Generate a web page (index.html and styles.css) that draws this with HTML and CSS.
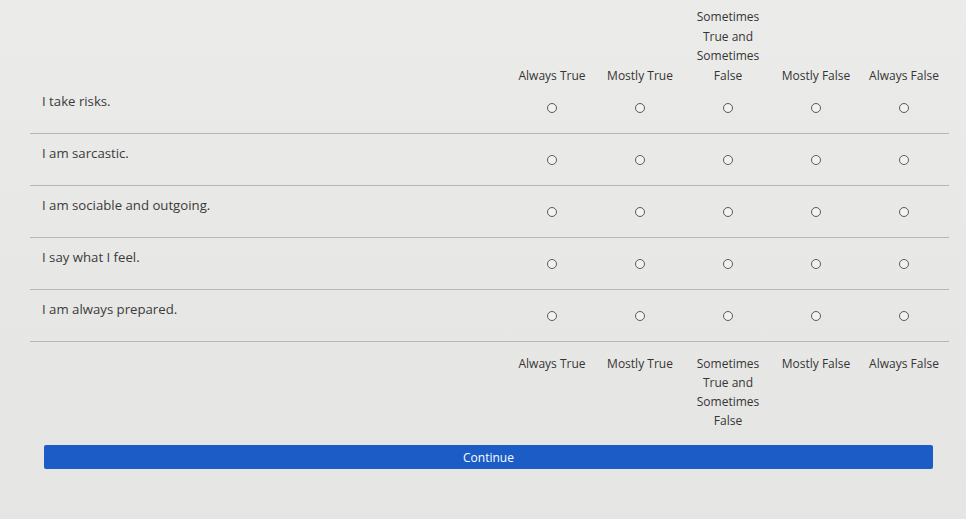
FILE: index.html
```html
<!DOCTYPE html>
<html lang="en">
<head>
<meta charset="utf-8">
<title>Survey</title>
<link rel="stylesheet" href="styles.css">
</head>
<body>
<main class="page">
  <div class="matrix">
    <div class="row head">
      <div class="label"></div>
      <div class="col">Always True</div>
      <div class="col">Mostly True</div>
      <div class="col">Sometimes True and Sometimes False</div>
      <div class="col">Mostly False</div>
      <div class="col">Always False</div>
    </div>
    <div class="row item">
      <div class="label">I take risks.</div>
      <div class="cell"><input type="radio" name="q1"></div>
      <div class="cell"><input type="radio" name="q1"></div>
      <div class="cell"><input type="radio" name="q1"></div>
      <div class="cell"><input type="radio" name="q1"></div>
      <div class="cell"><input type="radio" name="q1"></div>
    </div>
    <div class="row item">
      <div class="label">I am sarcastic.</div>
      <div class="cell"><input type="radio" name="q2"></div>
      <div class="cell"><input type="radio" name="q2"></div>
      <div class="cell"><input type="radio" name="q2"></div>
      <div class="cell"><input type="radio" name="q2"></div>
      <div class="cell"><input type="radio" name="q2"></div>
    </div>
    <div class="row item">
      <div class="label">I am sociable and outgoing.</div>
      <div class="cell"><input type="radio" name="q3"></div>
      <div class="cell"><input type="radio" name="q3"></div>
      <div class="cell"><input type="radio" name="q3"></div>
      <div class="cell"><input type="radio" name="q3"></div>
      <div class="cell"><input type="radio" name="q3"></div>
    </div>
    <div class="row item">
      <div class="label">I say what I feel.</div>
      <div class="cell"><input type="radio" name="q4"></div>
      <div class="cell"><input type="radio" name="q4"></div>
      <div class="cell"><input type="radio" name="q4"></div>
      <div class="cell"><input type="radio" name="q4"></div>
      <div class="cell"><input type="radio" name="q4"></div>
    </div>
    <div class="row item">
      <div class="label">I am always prepared.</div>
      <div class="cell"><input type="radio" name="q5"></div>
      <div class="cell"><input type="radio" name="q5"></div>
      <div class="cell"><input type="radio" name="q5"></div>
      <div class="cell"><input type="radio" name="q5"></div>
      <div class="cell"><input type="radio" name="q5"></div>
    </div>
    <div class="row foot">
      <div class="label"></div>
      <div class="col">Always True</div>
      <div class="col">Mostly True</div>
      <div class="col">Sometimes True and Sometimes False</div>
      <div class="col">Mostly False</div>
      <div class="col">Always False</div>
    </div>
  </div>
  <div class="actions">
    <button class="continue" type="button">Continue</button>
  </div>
</main>
</body>
</html>
```
FILE: styles.css
```css
* { box-sizing: border-box; }
html, body {
  margin: 0;
  padding: 0;
  background: #e8e8e6;
}
body {
  font-family: "Open Sans", "Noto Sans", "Liberation Sans", sans-serif;
  color: #353535;
  width: 966px;
  height: 519px;
  overflow: hidden;
  background: linear-gradient(180deg, #ebebe9 0%, #e7e7e5 60%, #e5e5e3 100%);
}
.page {
  padding: 7px 0 0 30px;
}
.matrix {
  width: 919px;
  display: flex;
  flex-direction: column;
}
.row {
  display: grid;
  grid-template-columns: 478px repeat(5, 88px);
}
.head {
  align-items: end;
  height: 75px;
}
.col {
  text-align: center;
  font-size: 12px;
  line-height: 19.5px;
  padding: 0 6px;
}
.item {
  height: 52px;
  border-bottom: 1px solid #b7b7b5;
}
.item .label {
  font-size: 13.2px;
  padding: 10px 0 0 12px;
  color: #3b3b3b;
}
.cell {
  display: flex;
  justify-content: center;
  align-items: center;
}
input[type="radio"] {
  appearance: none;
  -webkit-appearance: none;
  margin: 0;
  width: 10px;
  height: 10px;
  border: 1.5px solid #5a5a5a;
  border-radius: 50%;
  background: #f2f2f0;
}
.foot {
  align-items: start;
  padding-top: 12px;
}
.foot .col {
  line-height: 19px;
}
.actions {
  padding: 15px 0 0 14px;
}
.continue {
  display: block;
  width: 889px;
  height: 24px;
  border: none;
  border-radius: 2px;
  background: #1b5cc6;
  color: #ffffff;
  font-family: inherit;
  font-size: 12px;
  cursor: pointer;
}
```
